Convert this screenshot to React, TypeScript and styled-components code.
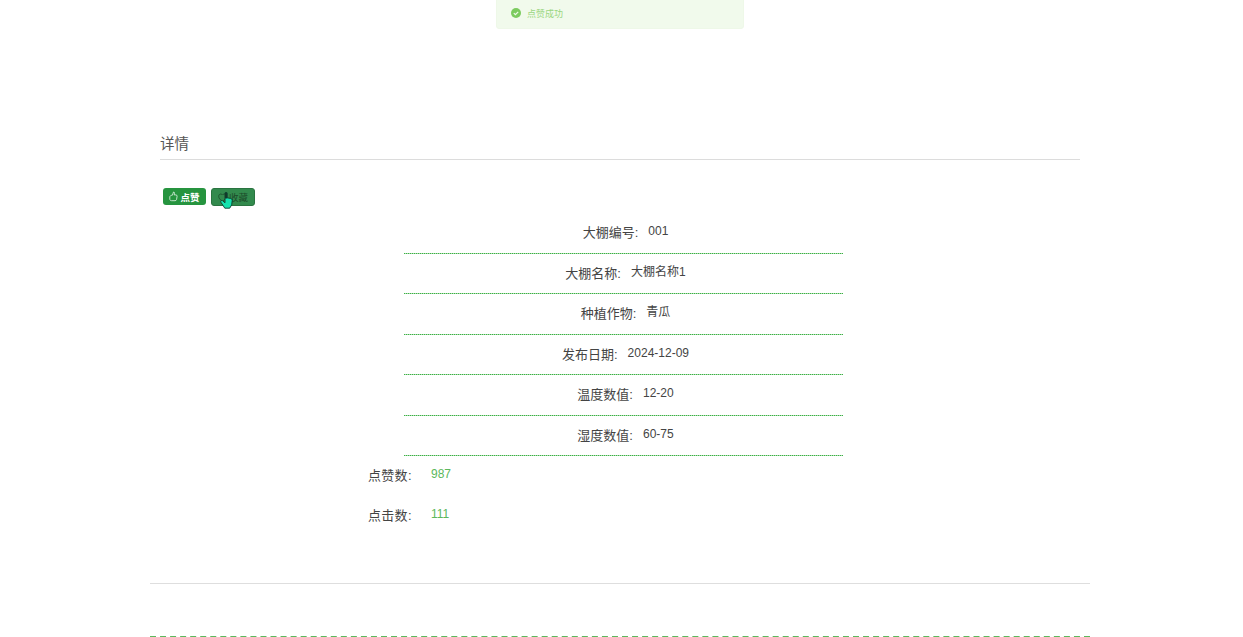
import React from 'react';
import styled, { createGlobalStyle } from 'styled-components';

const GlobalStyle = createGlobalStyle`
  html, body {
    margin: 0;
    padding: 0;
    background: #fff;
    font-family: "Liberation Sans", Arial, "Noto Sans CJK SC", sans-serif;
    color: #333;
    overflow: hidden;
  }
`;

const Page = styled.div`
  position: relative;
  width: 1243px;
  height: 637px;
  overflow: hidden;
`;

const Toast = styled.div`
  position: absolute;
  top: -4px;
  left: 496px;
  width: 248px;
  height: 33px;
  box-sizing: border-box;
  padding: 1px 0 0 14px;
  display: flex;
  align-items: center;
  gap: 6px;
  background: #f1faec;
  border: 1px solid #eef8e8;
  border-radius: 3px;
  color: #9ad67f;
  font-size: 9px;
`;

const ToastDot = styled.svg`
  width: 10px;
  height: 10px;
`;

const Container = styled.main`
  width: 940px;
  margin: 0 0 0 150px;
  padding-top: 132px;
`;

const Inner = styled.section`
  padding: 0 10px;
`;

const Heading = styled.h2`
  margin: 0;
  height: 27px;
  border-bottom: 1px solid #dcdcdc;
  font-size: 14.5px;
  font-weight: 400;
  line-height: 25px;
  color: #555;
`;

const Toolbar = styled.div`
  display: flex;
  gap: 5px;
  margin: 28px 0 0 3px;
  height: 18px;
`;

const ActionButton = styled.button<{ $hover?: boolean }>`
  display: flex;
  align-items: center;
  justify-content: center;
  gap: 2px;
  width: ${p => (p.$hover ? 44 : 43)}px;
  height: ${p => (p.$hover ? 18 : 17)}px;
  padding: 0;
  border: ${p => (p.$hover ? '1px solid #2a7440' : 'none')};
  border-radius: 3px;
  background: ${p => (p.$hover ? '#328a4d' : '#26943f')};
  color: ${p => (p.$hover ? '#1c4a2a' : '#fff')};
  font: ${p => (p.$hover ? 400 : 700)} 9.5px "Liberation Sans", "Noto Sans CJK SC", sans-serif;
`;

const ButtonIcon = styled.svg`
  width: 9px;
  height: 11px;
  flex: none;
`;

const DetailList = styled.div`
  width: 439px;
  margin: 7px 0 0 244px;
`;

const DetailRow = styled.div`
  height: 37px;
  padding: 0 0 2px 4px;
  display: flex;
  justify-content: center;
  align-items: center;
  gap: 10px;
  border-bottom: 1px dotted #3cb043;
  background: linear-gradient(#a8dcae, #a8dcae) bottom / 100% 1px no-repeat border-box;

  &:nth-child(odd) {
    padding-bottom: 3px;
  }
`;

const Label = styled.span`
  font-size: 13px;
  color: #444;
  white-space: nowrap;
`;

const Value = styled.span`
  font-size: 12px;
  color: #444;
  line-height: 16px;
  margin-top: -1px;
`;

const StatList = styled.div`
  margin: -1px 0 0 208px;
`;

const StatRow = styled.div`
  height: 40px;
  display: flex;
  align-items: center;
`;

const StatLabel = styled.span`
  width: 63px;
  margin-top: -2px;
  font-size: 13px;
  letter-spacing: 0.3px;
  color: #444;
`;

const StatValue = styled.span`
  font-size: 12px;
  color: #5cb85c;
  margin-top: -3px;
`;

const FooterLine = styled.div`
  margin-top: 48px;
  border-top: 1px solid #dedede;
`;

const FooterDashed = styled.div`
  margin-top: 52px;
  border-top: 2px dashed #5cb85c;
`;

const Cursor = styled.svg`
  position: absolute;
  left: 220px;
  top: 192px;
  width: 13px;
  height: 17px;
`;

const details = [
  ['大棚编号:', '001'],
  ['大棚名称:', '大棚名称1'],
  ['种植作物:', '青瓜'],
  ['发布日期:', '2024-12-09'],
  ['温度数值:', '12-20'],
  ['湿度数值:', '60-75'],
];

export default function App() {
  return (
    <Page>
      <GlobalStyle />
      <Toast>
        <ToastDot viewBox="0 0 10 10">
          <circle cx="5" cy="5" r="5" fill="#7ccb5f" />
          <path d="M2.8 5.1 4.4 6.6 7.2 3.8" stroke="#f0f9eb" strokeWidth="1.2" fill="none" />
        </ToastDot>
        点赞成功
      </Toast>
      <Container>
        <Inner>
          <Heading>详情</Heading>
          <Toolbar>
            <ActionButton>
              <ButtonIcon viewBox="0 0 9 11">
                <path
                  d="M3.4 4.2 4.5 1c.9 0 1.2.8 1 1.6l-.3 1.3h1.7c.8 0 1.3.6 1.2 1.3L7.6 8.4c-.1.8-.8 1.3-1.5 1.3H2.4C1.4 9.7.8 9 .8 8.1V6c0-1 1.1-1.8 2.6-1.8z"
                  fill="none"
                  stroke="#e6f5ea"
                  strokeWidth="0.8"
                />
              </ButtonIcon>
              点赞
            </ActionButton>
            <ActionButton $hover>
              <ButtonIcon viewBox="0 0 9 11">
                <path
                  d="M4.5 9.5C2 7.6.7 6.2.7 4.3.7 2.9 1.7 2 2.8 2c.8 0 1.3.4 1.7 1 .4-.6.9-1 1.7-1 1.1 0 2.1.9 2.1 2.3 0 1.9-1.3 3.3-3.8 5.2z"
                  fill="none"
                  stroke="#1c4a2a"
                  strokeWidth="0.8"
                />
              </ButtonIcon>
              收藏
            </ActionButton>
          </Toolbar>
          <DetailList>
            {details.map(([label, value]) => (
              <DetailRow key={label}>
                <Label>{label}</Label>
                <Value>{value}</Value>
              </DetailRow>
            ))}
          </DetailList>
          <StatList>
            <StatRow>
              <StatLabel>点赞数:</StatLabel>
              <StatValue>987</StatValue>
            </StatRow>
            <StatRow>
              <StatLabel>点击数:</StatLabel>
              <StatValue>111</StatValue>
            </StatRow>
          </StatList>
        </Inner>
        <FooterLine />
        <FooterDashed />
      </Container>
      <Cursor viewBox="0 0 13 17">
        <path
          d="M5 1.2c0-1.2 2.2-1.2 2.2 0v4.6l3.2.6c1.2.2 1.9 1 1.8 2.2l-.5 4.2-2 3.4H4.8L1 10.4C0 9 1.6 7.6 2.8 8.8L5 10.8z"
          fill="#14e2ae"
          stroke="#0f3b2c"
          strokeWidth="0.9"
        />
        <path d="M5 1.2c0-1.2 2.2-1.2 2.2 0v5.4H5z" fill="#123a2a" />
      </Cursor>
    </Page>
  );
}
